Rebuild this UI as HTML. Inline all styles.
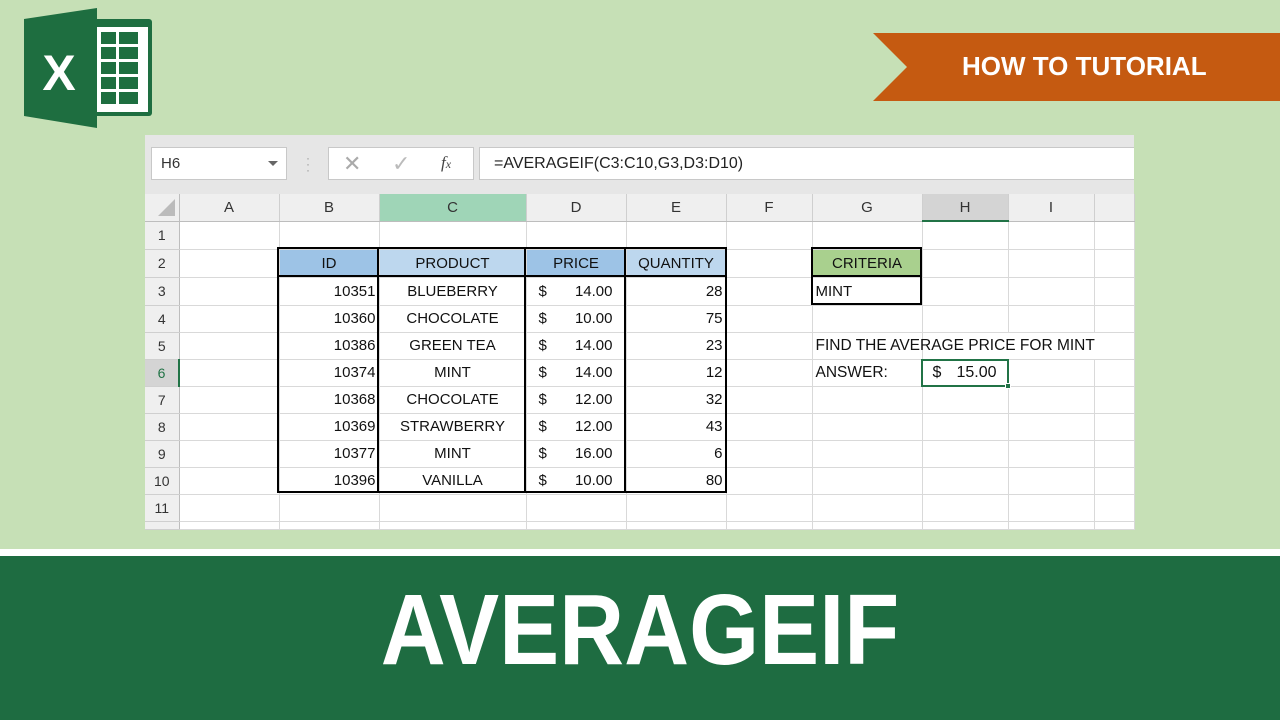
<!DOCTYPE html>
<html><head><meta charset="utf-8">
<style>
*{margin:0;padding:0;box-sizing:border-box}
body{width:1280px;height:720px;overflow:hidden;background:#c6e0b6;font-family:"Liberation Sans",sans-serif;position:relative}
.a{position:absolute}
table{position:absolute;left:145px;top:194px;border-collapse:collapse;table-layout:fixed;font-size:15px;color:#111}
td{border-right:1px solid #d9d9d9;border-bottom:1px solid #d9d9d9;padding:0 3px;white-space:nowrap;overflow:visible;background:#fff}
tr.h td{background:#efefef;text-align:center;color:#333;border-right:1px solid #cfcfcf;border-bottom:1px solid #bdbdbd}
td.rh{background:#efefef;color:#333;text-align:center;padding:0;border-right:1px solid #bdbdbd;border-bottom:1px solid #cfcfcf;font-size:14px}
.r{text-align:right}.c{text-align:center}
.p{display:flex;justify-content:space-between;padding:0 10px 0 9px}
</style></head><body>
<!-- excel logo -->
<svg class="a" style="left:0;top:0" width="160" height="135" viewBox="0 0 160 135">
<rect x="90" y="19" width="62" height="97" rx="3" fill="#1e6e40"/>
<rect x="97" y="27" width="51" height="85" fill="#fff"/>
<g fill="#1e6e40">
<rect x="101" y="32" width="15" height="12"/><rect x="101" y="47" width="15" height="12"/><rect x="101" y="62" width="15" height="12"/><rect x="101" y="77" width="15" height="12"/><rect x="101" y="92" width="15" height="12"/>
<rect x="119" y="32" width="19" height="12"/><rect x="119" y="47" width="19" height="12"/><rect x="119" y="62" width="19" height="12"/><rect x="119" y="77" width="19" height="12"/><rect x="119" y="92" width="19" height="12"/></g>
<polygon points="24,19 97,8 97,128 24,116" fill="#1e6e40"/>
<text x="59" y="90" font-family="Liberation Sans" font-weight="bold" font-size="50" fill="#fff" text-anchor="middle">X</text>
</svg>
<!-- banner -->
<div class="a" style="left:873px;top:33px;width:407px;height:68px;background:#c55a11;clip-path:polygon(0 0,100% 0,100% 100%,0 100%,34px 50%)"></div>
<div class="a" style="left:962px;top:51px;color:#fff;font-weight:bold;font-size:26px">HOW TO TUTORIAL</div>
<!-- sheet panel -->
<div class="a" style="left:145px;top:135px;width:989px;height:394px;background:#e6e6e6"></div>
<div class="a" style="left:151px;top:147px;width:136px;height:33px;background:#fff;border:1px solid #c8c8c8;font-size:15px;color:#333;padding:7px 0 0 9px">H6</div>
<div class="a" style="left:268px;top:161px;width:0;height:0;border-left:5px solid transparent;border-right:5px solid transparent;border-top:5px solid #666"></div>
<div class="a" style="left:306px;top:155px;color:#999;font-size:12px;line-height:6px">·<br>·<br>·</div>
<div class="a" style="left:328px;top:147px;width:146px;height:33px;background:#fff;border:1px solid #c8c8c8"></div>
<div class="a" style="left:343px;top:151px;color:#aaa;font-size:22px">✕</div>
<div class="a" style="left:392px;top:151px;color:#bbb;font-size:22px">✓</div>
<div class="a" style="left:441px;top:153px;color:#444;font-size:17px;font-style:italic;font-family:'Liberation Serif',serif">f<span style="font-size:12px">x</span></div>
<div class="a" style="left:479px;top:147px;width:655px;height:33px;background:#fff;border:1px solid #c8c8c8;border-right:none;font-size:16px;color:#222;padding:7px 0 0 14px">=AVERAGEIF(C3:C10,G3,D3:D10)</div>
<table>
<colgroup><col style="width:34px"><col style="width:100px"><col style="width:100px"><col style="width:147px"><col style="width:100px"><col style="width:100px"><col style="width:86px"><col style="width:110px"><col style="width:86px"><col style="width:86px"><col style="width:40px"></colgroup>
<tr class="h" style="height:27px"><td style="border-right:1px solid #bdbdbd"></td><td>A</td><td>B</td><td style="background:#9fd5b7">C</td><td>D</td><td>E</td><td>F</td><td>G</td><td style="background:#d4d4d4;border-bottom:2px solid #217346">H</td><td>I</td><td></td></tr>
<tr style="height:28px"><td class="rh">1</td><td></td><td></td><td></td><td></td><td></td><td></td><td></td><td></td><td></td><td></td></tr>
<tr style="height:28px"><td class="rh">2</td><td></td><td class="c" style="background:#9dc3e6">ID</td><td class="c" style="background:#bdd7ee">PRODUCT</td><td class="c" style="background:#9dc3e6">PRICE</td><td class="c" style="background:#bdd7ee">QUANTITY</td><td></td><td class="c" style="background:#a9d08e">CRITERIA</td><td></td><td></td><td></td></tr>
<tr style="height:28px"><td class="rh">3</td><td></td><td class="r">10351</td><td class="c">BLUEBERRY</td><td><div class="p"><span>$</span><span>14.00</span></div></td><td class="r">28</td><td></td><td>MINT</td><td></td><td></td><td></td></tr>
<tr style="height:27px"><td class="rh">4</td><td></td><td class="r">10360</td><td class="c">CHOCOLATE</td><td><div class="p"><span>$</span><span>10.00</span></div></td><td class="r">75</td><td></td><td></td><td></td><td></td><td></td></tr>
<tr style="height:27px"><td class="rh">5</td><td></td><td class="r">10386</td><td class="c">GREEN TEA</td><td><div class="p"><span>$</span><span>14.00</span></div></td><td class="r">23</td><td></td><td style="overflow:visible;position:relative"><span style="position:absolute;left:3px;top:4px;font-size:15.5px">FIND THE AVERAGE PRICE FOR MINT</span></td><td style="border-right:none"></td><td style="border-right:none"></td><td></td></tr>
<tr style="height:27px"><td class="rh" style="background:#d4d4d4;color:#217346;border-right:2px solid #217346">6</td><td></td><td class="r">10374</td><td class="c">MINT</td><td><div class="p"><span>$</span><span>14.00</span></div></td><td class="r">12</td><td></td><td style="font-size:15.5px">ANSWER:</td><td><div class="p" style="padding:0 8px 0 7px;font-size:16px"><span>$</span><span>15.00</span></div></td><td></td><td></td></tr>
<tr style="height:27px"><td class="rh">7</td><td></td><td class="r">10368</td><td class="c">CHOCOLATE</td><td><div class="p"><span>$</span><span>12.00</span></div></td><td class="r">32</td><td></td><td></td><td></td><td></td><td></td></tr>
<tr style="height:27px"><td class="rh">8</td><td></td><td class="r">10369</td><td class="c">STRAWBERRY</td><td><div class="p"><span>$</span><span>12.00</span></div></td><td class="r">43</td><td></td><td></td><td></td><td></td><td></td></tr>
<tr style="height:27px"><td class="rh">9</td><td></td><td class="r">10377</td><td class="c">MINT</td><td><div class="p"><span>$</span><span>16.00</span></div></td><td class="r">6</td><td></td><td></td><td></td><td></td><td></td></tr>
<tr style="height:27px"><td class="rh">10</td><td></td><td class="r">10396</td><td class="c">VANILLA</td><td><div class="p"><span>$</span><span>10.00</span></div></td><td class="r">80</td><td></td><td></td><td></td><td></td><td></td></tr>
<tr style="height:27px"><td class="rh">11</td><td></td><td></td><td></td><td></td><td></td><td></td><td></td><td></td><td></td><td></td></tr>
<tr style="height:8px"><td class="rh"></td><td></td><td></td><td></td><td></td><td></td><td></td><td></td><td></td><td></td><td></td></tr>
</table>
<div class="a" style="left:158px;top:199px;width:0;height:0;border-left:17px solid transparent;border-bottom:17px solid #bbb"></div>
<div class="a" style="left:277px;top:247px;width:450px;height:246px;border:2px solid #000"></div>
<div class="a" style="left:377px;top:247px;width:2px;height:246px;background:#000"></div>
<div class="a" style="left:524px;top:247px;width:2px;height:246px;background:#000"></div>
<div class="a" style="left:624px;top:247px;width:2px;height:246px;background:#000"></div>
<div class="a" style="left:277px;top:275px;width:450px;height:2px;background:#000"></div>
<div class="a" style="left:811px;top:247px;width:111px;height:58px;border:2px solid #000"></div>
<div class="a" style="left:811px;top:275px;width:111px;height:2px;background:#000"></div>
<div class="a" style="left:921px;top:359px;width:88px;height:28px;border:2px solid #217346"></div>
<div class="a" style="left:1005px;top:383px;width:6px;height:6px;background:#217346;border:1px solid #fff"></div>
<div class="a" style="left:0;top:549px;width:1280px;height:7px;background:#fff"></div>
<div class="a" style="left:0;top:556px;width:1280px;height:164px;background:#1e6c41"></div>
<div class="a" style="left:0;top:575px;width:1280px;text-align:center;color:#fff;font-weight:bold;font-size:100px;line-height:110px"><span style="display:inline-block;transform:scaleX(0.9)">AVERAGEIF</span></div>
</body></html>
